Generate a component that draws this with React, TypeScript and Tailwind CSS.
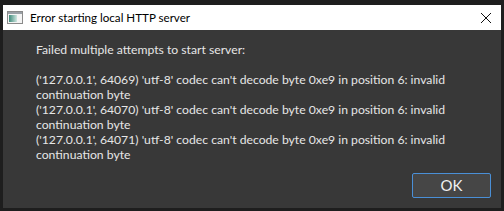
import React from "react";

export default function App() {
  const lines = [
    "Failed multiple attempts to start server:",
    "\u00a0",
    "('127.0.0.1', 64069) 'utf-8' codec can't decode byte 0xe9 in position 6: invalid",
    "continuation byte",
    "('127.0.0.1', 64070) 'utf-8' codec can't decode byte 0xe9 in position 6: invalid",
    "continuation byte",
    "('127.0.0.1', 64071) 'utf-8' codec can't decode byte 0xe9 in position 6: invalid",
    "continuation byte",
  ];
  return (
    <div
      className="w-[504px] h-[211px] bg-[#1e1e1e] pt-[5px] pl-[3px] overflow-hidden"
      style={{ fontFamily: 'Lato, "Noto Sans", sans-serif' }}
    >
      <div className="w-[498px] h-[203px] flex flex-col bg-[#383838]">
        <div className="h-[25px] bg-white flex items-center pl-[4px] pr-[8px]">
          <svg width="16" height="14" viewBox="0 0 16 14" className="mr-[7px]">
            <defs>
              <linearGradient id="g" x1="0" x2="1" y1="0" y2="0">
                <stop offset="0" stopColor="#3d8a7a" />
                <stop offset="1" stopColor="#cfe6e0" />
              </linearGradient>
            </defs>
            <rect x="0.5" y="0.5" width="15" height="12" fill="#f4f4f4" stroke="#8a8a8a" />
            <rect x="1" y="1" width="14" height="2" fill="#9aa0a6" />
            <rect x="2" y="4" width="8" height="7" fill="url(#g)" />
          </svg>
          <span className="text-[11.6px] text-black leading-none">Error starting local HTTP server</span>
          <div className="flex-1" />
          <svg width="12" height="12" viewBox="0 0 12 12" className="mr-[1px]">
            <path d="M1 1 L11 11 M11 1 L1 11" stroke="#111" strokeWidth="1" />
          </svg>
        </div>
        <div className="flex-1 flex flex-col pt-[12px] pl-[33px] pr-[10px] pb-[10px]">
          <div className="text-[12.2px] leading-[15px] text-[#e6e6e6]">
            {lines.map((l, i) => (
              <div key={i} className="whitespace-nowrap">{l}</div>
            ))}
          </div>
          <div className="flex-1" />
          <div className="flex justify-end">
            <button className="w-[79px] h-[25px] rounded-[2px] border border-[#4a8fd6] bg-[#464646] text-[#f0f0f0] text-[15px] leading-none">
              OK
            </button>
          </div>
        </div>
      </div>
    </div>
  );
}
